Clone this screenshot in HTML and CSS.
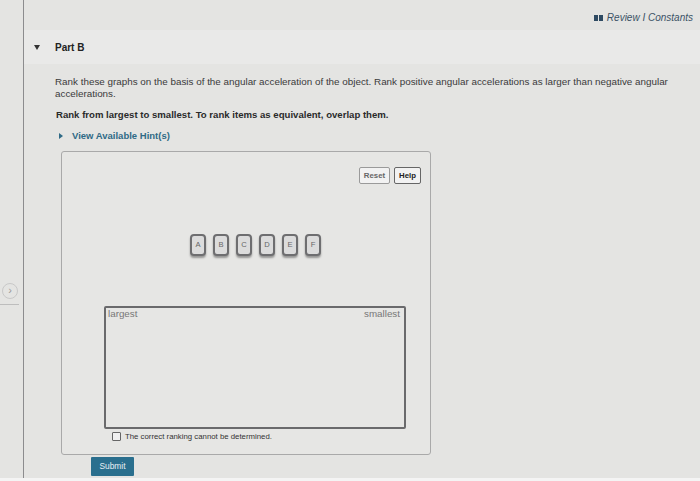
FILE: index.html
```html
<!DOCTYPE html>
<html>
<head>
<meta charset="utf-8">
<link rel="stylesheet" href="styles.css">
</head>
<body>
<div class="page">
  <div class="rail">
    <div class="rail-btn">&#8250;</div>
    <div class="rail-line"></div>
  </div>
  <div class="main">
    <div class="topbar">
      <span class="book"><i></i><i></i></span>
      <span class="links">Review I Constants</span>
    </div>
    <div class="partbar">
      <span class="tri"></span>
      <span class="part-title">Part B</span>
    </div>
    <div class="content">
      <p class="prompt">Rank these graphs on the basis of the angular acceleration of the object. Rank positive angular accelerations as larger than negative angular accelerations.</p>
      <p class="instr">Rank from largest to smallest. To rank items as equivalent, overlap them.</p>
      <div class="hint"><span class="hint-tri"></span>View Available Hint(s)</div>
      <div class="widget">
        <div class="tools">
          <span class="btn">Reset</span>
          <span class="btn btn-bold">Help</span>
        </div>
        <div class="tiles">
          <span class="tile">A</span>
          <span class="tile">B</span>
          <span class="tile">C</span>
          <span class="tile">D</span>
          <span class="tile">E</span>
          <span class="tile">F</span>
        </div>
        <div class="rankbox">
          <span>largest</span>
          <span>smallest</span>
        </div>
        <label class="check"><span class="box"></span>The correct ranking cannot be determined.</label>
      </div>
      <div class="submit">Submit</div>
    </div>
  </div>
</div>
</body>
</html>
```

FILE: styles.css
```css
html, body {
  margin: 0;
  padding: 0;
}
body {
  background: #e4e4e2;
  font-family: "Liberation Sans", Arial, sans-serif;
  color: #333;
  width: 700px;
  height: 481px;
  overflow: hidden;
}
.page {
  display: flex;
  height: 478px;
  border-bottom: 3px solid #f4f4f4;
}
.rail {
  width: 23px;
  border-right: 1px solid #8c8c8e;
  display: flex;
  flex-direction: column;
  align-items: flex-start;
}
.rail-btn {
  margin-top: 283px;
  margin-left: 2px;
  width: 14px;
  height: 14px;
  border: 1px solid #c8c8c8;
  border-radius: 50%;
  color: #999;
  font-size: 11px;
  line-height: 13px;
  text-align: center;
}
.rail-line {
  margin-top: 5px;
  width: 19px;
  border-top: 1px solid #bdbdbd;
}
.main {
  flex: 1;
  display: flex;
  flex-direction: column;
}
.topbar {
  height: 30px;
  display: flex;
  align-items: center;
  justify-content: flex-end;
  padding-right: 7px;
  gap: 4px;
  box-sizing: border-box;
  padding-top: 5px;
}
.book {
  display: flex;
  gap: 1px;
}
.book i {
  width: 4px;
  height: 6px;
  background: #2e4a62;
}
.links {
  font-style: italic;
  font-size: 10px;
  color: #3b5266;
}
.partbar {
  height: 34px;
  background: #e9e9e8;
  display: flex;
  align-items: center;
  padding-left: 10px;
  gap: 15px;
}
.tri {
  width: 0;
  height: 0;
  border-left: 3.5px solid transparent;
  border-right: 3.5px solid transparent;
  border-top: 5px solid #333;
}
.part-title {
  font-weight: bold;
  font-size: 10px;
  color: #222;
}
.content {
  padding-left: 31px;
  display: flex;
  flex-direction: column;
  align-items: flex-start;
}
.prompt {
  margin: 12px 0 0 0;
  width: 640px;
  font-size: 9.85px;
  line-height: 12px;
  color: #3a3a3a;
}
.instr {
  margin: 9px 0 0 1px;
  font-size: 9.6px;
  font-weight: bold;
  color: #2a2a2a;
}
.hint {
  margin: 10px 0 0 4px;
  font-size: 9.5px;
  font-weight: bold;
  color: #2f6a86;
  display: flex;
  align-items: center;
  gap: 9px;
}
.hint-tri {
  width: 0;
  height: 0;
  border-top: 3px solid transparent;
  border-bottom: 3px solid transparent;
  border-left: 4px solid #2f6a86;
}
.widget {
  margin: 10px 0 0 6px;
  width: 370px;
  height: 304px;
  box-sizing: border-box;
  border: 1px solid #a9a9a9;
  border-radius: 3px;
  background: #e6e6e4;
  display: flex;
  flex-direction: column;
}
.tools {
  display: flex;
  justify-content: flex-end;
  gap: 4px;
  padding: 15px 9px 0 0;
}
.btn {
  height: 15px;
  padding: 0 4px;
  border: 1px solid #9a9a9a;
  border-radius: 2px;
  background: #f2f2f2;
  font-size: 7.8px;
  font-weight: bold;
  color: #666;
  line-height: 15px;
}
.btn-bold {
  color: #222;
  border-color: #666;
}
.tiles {
  display: flex;
  gap: 7px;
  margin: 50px 0 0 128px;
}
.tile {
  width: 12px;
  height: 18px;
  border: 2px solid #6e6e70;
  border-radius: 4px;
  background: #dcdcdc;
  box-shadow: 0 2px 2px rgba(0,0,0,0.35);
  font-size: 7.6px;
  color: #666;
  text-align: center;
  line-height: 17px;
}
.rankbox {
  margin: 50px 0 0 42px;
  width: 302px;
  height: 123px;
  box-sizing: border-box;
  border: 2px solid #6a6a6c;
  border-radius: 2px;
  display: flex;
  justify-content: space-between;
  align-items: flex-start;
  padding: 0 4px 0 2px;
  font-size: 9.8px;
  color: #777;
  line-height: 11px;
}
.check {
  margin: 3px 0 0 50px;
  display: flex;
  align-items: center;
  gap: 4px;
  font-size: 7.8px;
  color: #333;
}
.box {
  width: 7px;
  height: 7px;
  border: 1px solid #666;
  border-radius: 1px;
  background: #f0f0f0;
}
.submit {
  margin: 2px 0 0 36px;
  width: 43px;
  height: 19px;
  background: #2a6f8e;
  border-radius: 1px;
  color: #e8f0f4;
  font-size: 8.4px;
  line-height: 19px;
  text-align: center;
}
```
